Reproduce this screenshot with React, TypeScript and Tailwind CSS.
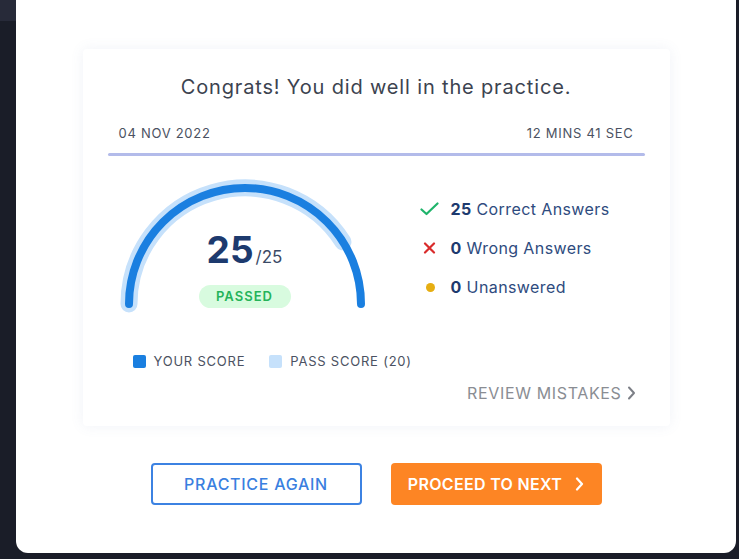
import React from 'react';

const FONT = { fontFamily: 'Inter, "Noto Sans", sans-serif' };

// Score gauge: full half circle for your score, lighter wide arc for the pass mark
function Gauge({ score, total, pass }: { score: number; total: number; pass: number }) {
  const cx = 132;
  const cy = 134;
  const r = 116;
  const point = (frac: number) => {
    const a = Math.PI - frac * Math.PI;
    return [cx + r * Math.cos(a), cy - r * Math.sin(a)];
  };
  const [px, py] = point(pass / total + 0.02);
  const [sx, sy] = point(score / total);

  return (
    <div className="relative w-[264px] h-[150px]">
      <svg width="264" height="150" viewBox="0 0 264 150">
        <path
          d={`M ${cx - r} ${cy} A ${r} ${r} 0 0 1 ${px} ${py}`}
          fill="none"
          stroke="#c6e1fb"
          strokeWidth="17"
          strokeLinecap="round"
        />
        <path
          d={`M ${cx - r} ${cy} A ${r} ${r} 0 0 1 ${sx} ${sy}`}
          fill="none"
          stroke="#1a7fe0"
          strokeWidth="8"
          strokeLinecap="round"
        />
      </svg>
      <div className="absolute left-0 right-0 top-[58px] flex flex-col items-center">
        <div className="flex items-baseline">
          <span className="text-[37px] leading-[44px] font-bold text-[#1d3a6e]">{score}</span>
          <span className="ml-[2px] text-[17px] text-[#3b4a66]">/{total}</span>
        </div>
        <span className="mt-[13px] h-[23px] w-[92px] rounded-full bg-[#d8fbdf] text-[#25b35a] text-[13px] font-semibold tracking-[0.08em] flex items-center justify-center">
          PASSED
        </span>
      </div>
    </div>
  );
}

function StatRow({ icon, count, label }: { icon: React.ReactNode; count: number; label: string }) {
  return (
    <div className="flex items-center h-[24px]">
      <span className="w-[31px] flex items-center">{icon}</span>
      <span className="text-[16px] text-[#2e4b7e] tracking-[0.025em]">
        <b className="font-bold text-[#1d3a6e]">{count}</b> {label}
      </span>
    </div>
  );
}

export default function App() {
  return (
    <div className="flex w-full h-[559px] bg-[#1a1d28]" style={FONT}>
      <div className="w-[16px] flex flex-col">
        <div className="h-[21px] bg-[#272a39]" />
      </div>

      <div className="w-[720px] h-[553px] bg-white rounded-b-[12px] flex flex-col items-center pt-[49px]">
        <div className="w-[587px] bg-white rounded-[4px] shadow-[0_0_14px_rgba(90,110,170,0.09)] px-[25px] pt-[24px] pb-[21px] flex flex-col">
          <h1 className="text-center text-[20px] leading-[28px] text-[#3c4350] tracking-[0.042em]">
            Congrats! You did well in the practice.
          </h1>

          <div className="mt-[22px] flex justify-between px-[11px] text-[13px] leading-[20px] text-[#4b5262] tracking-[0.055em]">
            <span>04 NOV 2022</span>
            <span>12 MINS 41 SEC</span>
          </div>
          <div className="mt-[10px] h-[3px] bg-[#b3bbea] rounded-full" />

          <div className="mt-[14px] flex">
            <div className="w-[302px] shrink-0 flex flex-col ml-[5px]">
              <Gauge score={25} total={25} pass={20} />
              <div className="mt-[32px] ml-[20px] flex items-center text-[13px] leading-[18px] text-[#4b5262] tracking-[0.06em] whitespace-nowrap">
                <span className="w-[13px] h-[13px] rounded-[2px] bg-[#1a7fe0]" />
                <span className="ml-[8px]">YOUR SCORE</span>
                <span className="ml-[24px] w-[13px] h-[13px] rounded-[2px] bg-[#c6e1fb]" />
                <span className="ml-[8px]">PASS SCORE (20)</span>
              </div>
            </div>

            <div className="ml-[5px] mt-[27px] flex flex-col gap-[15px]">
              <StatRow
                count={25}
                label="Correct Answers"
                icon={
                  <svg width="19" height="14" viewBox="0 0 19 14">
                    <path d="M1.5 7.5 L6.5 12 L17.5 1.5" fill="none" stroke="#1fb46b" strokeWidth="2.2" strokeLinecap="round" strokeLinejoin="round" />
                  </svg>
                }
              />
              <StatRow
                count={0}
                label="Wrong Answers"
                icon={
                  <svg width="19" height="12" viewBox="0 0 19 12">
                    <path d="M5 1.5 L14 10.5 M14 1.5 L5 10.5" fill="none" stroke="#d92b2b" strokeWidth="2.2" strokeLinecap="round" />
                  </svg>
                }
              />
              <StatRow
                count={0}
                label="Unanswered"
                icon={<span className="ml-[6px] w-[9px] h-[9px] rounded-full bg-[#e6ae12]" />}
              />
            </div>
          </div>

          <div className="mt-[11px] flex justify-end pr-[9px]">
            <span className="flex items-center text-[16px] leading-[24px] text-[#8a8d93] tracking-[0.04em]">
              REVIEW MISTAKES
              <svg className="ml-[5px]" width="9" height="14" viewBox="0 0 9 14">
                <path d="M2 1.5 L7 7 L2 12.5" fill="none" stroke="#7c7f86" strokeWidth="2" strokeLinecap="round" strokeLinejoin="round" />
              </svg>
            </span>
          </div>
        </div>

        <div className="mt-[37px] flex gap-[29px]">
          <button className="w-[211px] h-[42px] rounded-[4px] border-2 border-[#3c82e2] text-[#3a7fe0] text-[16px] font-medium bg-white tracking-[0.045em]">
            PRACTICE AGAIN
          </button>
          <button className="w-[211px] h-[42px] rounded-[4px] bg-[#fd8524] text-white text-[16px] font-semibold flex items-center justify-center tracking-[0.02em]">
            PROCEED TO NEXT
            <svg className="ml-[13px]" width="9" height="14" viewBox="0 0 9 14">
              <path d="M2 1.5 L7 7 L2 12.5" fill="none" stroke="#ffffff" strokeWidth="2.2" strokeLinecap="round" strokeLinejoin="round" />
            </svg>
          </button>
        </div>
      </div>

      <div className="flex-1" />
    </div>
  );
}
